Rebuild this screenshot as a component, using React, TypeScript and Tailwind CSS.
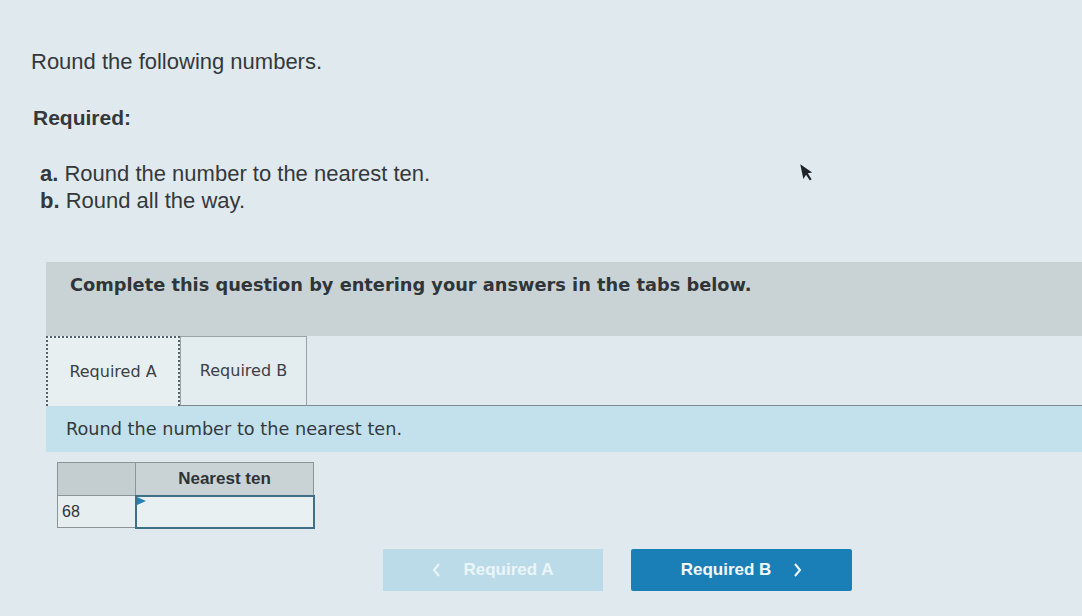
import React from "react";

const sans = { fontFamily: '"Liberation Sans", Arial, sans-serif' };
const verdana = { fontFamily: '"DejaVu Sans", Verdana, sans-serif' };

function Cursor() {
  return (
    <svg
      className="absolute left-[801px] top-[162px] rotate-[-12deg]"
      width="12"
      height="20"
      viewBox="0 0 12 20"
    >
      <path d="M1 1 L1 16 L4.5 12.5 L7 19 L9 18 L6.5 11.5 L11 11.5 Z" fill="#1f2428" />
    </svg>
  );
}

export default function App() {
  return (
    <div
      className="relative h-[616px] w-[1082px] overflow-hidden bg-[#e0eaee] text-[#34383b]"
      style={sans}
    >
      <Cursor />

      <div className="pl-[31px] pt-[49px]">
        <p className="text-[22px] leading-[26px]">Round the following numbers.</p>
        <p className="mt-[30px] pl-[2px] text-[21px] font-bold leading-[26px]">Required:</p>
        <div className="mt-[29px] pl-[9px] text-[22px] leading-[27px]">
          <p>
            <span className="font-bold">a.</span> Round the number to the nearest ten.
          </p>
          <p>
            <span className="font-bold">b.</span> Round all the way.
          </p>
        </div>
      </div>

      <div className="ml-[46px] mt-[48px]">
        <div
          className="h-[74px] bg-[#c9d3d6] pl-[24px] pt-[11px] text-[17.8px] font-bold leading-[24px] text-[#2f3538]"
          style={verdana}
        >
          Complete this question by entering your answers in the tabs below.
        </div>

        <div className="flex h-[70px]" style={verdana}>
          <div className="flex w-[134px] items-center justify-center border-2 border-b-0 border-dotted border-[#55606a] bg-[#e8eff1] text-[16px] text-[#3b4044]">
            Required A
          </div>
          <div className="flex w-[127px] items-center justify-center border border-[#9aa3a7] border-b-[#7f8a8f] bg-[#e3ecef] text-[16px] text-[#3b4044]">
            Required B
          </div>
          <div className="flex-1 border-b border-[#7f8a8f]"></div>
        </div>

        <div
          className="h-[46px] bg-[#c3e1ed] pl-[20px] pt-[11px] text-[17.7px] leading-[24px] text-[#34393c]"
          style={verdana}
        >
          Round the number to the nearest ten.
        </div>

        <table className="ml-[11px] mt-[10px] border-collapse text-[#2f3336]">
          <tbody>
            <tr className="h-[33px]">
              <td className="w-[78px] border border-[#8b9497] bg-[#c4cdcf]"></td>
              <td className="w-[178px] border border-[#8b9497] bg-[#c9d2d4] text-center text-[17px] font-bold">
                Nearest ten
              </td>
            </tr>
            <tr className="h-[32px]">
              <td className="border border-[#8b9497] bg-[#e6eef0] pl-[4px] text-[16px]">68</td>
              <td className="relative border-2 border-[#3f6f86] bg-[#e8f0f2]">
                <svg className="absolute left-0 top-0" width="9" height="9" viewBox="0 0 9 9">
                  <path d="M0 0 L9 4 L0 8 Z" fill="#2a7fb0" />
                </svg>
              </td>
            </tr>
          </tbody>
        </table>

        <div className="ml-[337px] mt-[20px] flex gap-[28px]">
          <button className="flex h-[42px] w-[220px] items-center justify-center gap-[22px] bg-[#bcdbe8] text-[17px] font-bold text-[#eaf5f9]">
            <svg width="9" height="14" viewBox="0 0 9 14">
              <path d="M7 1 L2 7 L7 13" stroke="#eaf5f9" strokeWidth="2" fill="none" />
            </svg>
            <span>Required A</span>
          </button>
          <button className="flex h-[42px] w-[221px] items-center justify-center gap-[22px] rounded-[2px] bg-[#1a7fb7] text-[17px] font-bold text-[#f2f8fb]">
            <span>Required B</span>
            <svg width="9" height="14" viewBox="0 0 9 14">
              <path d="M2 1 L7 7 L2 13" stroke="#f2f8fb" strokeWidth="2" fill="none" />
            </svg>
          </button>
        </div>
      </div>
    </div>
  );
}
